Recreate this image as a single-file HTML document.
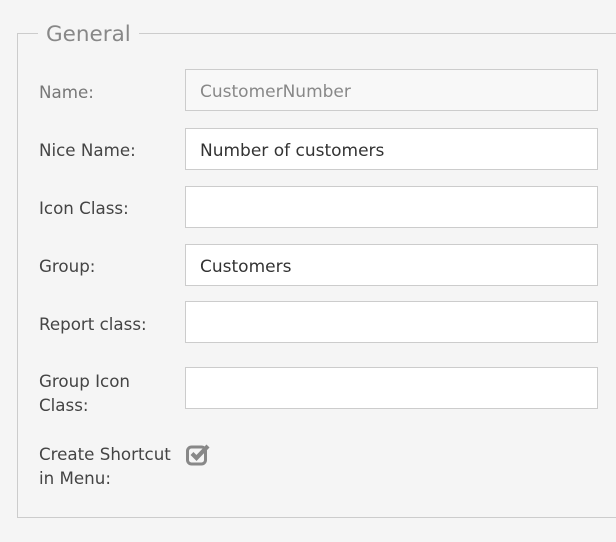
<!DOCTYPE html>
<html><head><style>
body{margin:0;width:616px;height:542px;background:#f5f5f5;font-family:"DejaVu Sans","Liberation Sans",sans-serif;overflow:hidden;position:relative}
.fs{position:absolute;left:17px;top:33px;width:640px;height:483px;border:1px solid #ccc;border-right:none}
.lg{position:absolute;left:38px;top:21px;padding:0 8px;background:#f5f5f5;color:#888;font-size:21.5px;line-height:28px}
.l{position:absolute;left:39px;color:#444;font-size:16.7px;line-height:24px}
.i{position:absolute;left:185px;height:40px;border:1px solid #ccc;background:#fff;color:#333;font-size:17px;line-height:44px;padding-left:14px;width:397px}
</style></head><body>
<div class="fs"></div>
<div class="lg">General</div>
<div class="l" style="top:80px;color:#777">Name:</div>
<div class="i" style="top:69px;background:#f8f8f8;color:#888">CustomerNumber</div>
<div class="l" style="top:138px">Nice Name:</div>
<div class="i" style="top:128px">Number of customers</div>
<div class="l" style="top:196px">Icon Class:</div>
<div class="i" style="top:186px"></div>
<div class="l" style="top:254px">Group:</div>
<div class="i" style="top:244px">Customers</div>
<div class="l" style="top:312px">Report class:</div>
<div class="i" style="top:301px"></div>
<div class="l" style="top:369px">Group Icon<br>Class:</div>
<div class="i" style="top:367px"></div>
<div class="l" style="top:442px">Create Shortcut<br>in Menu:</div>
<svg style="position:absolute;left:185px;top:441px" width="28" height="26" viewBox="0 0 28 26">
<rect x="2.5" y="6" width="18" height="17" rx="4" fill="none" stroke="#888" stroke-width="3"/>
<path d="M7 12.5 L11.5 17 L23 5" fill="none" stroke="#888" stroke-width="4.2"/>
</svg>
</body></html>
